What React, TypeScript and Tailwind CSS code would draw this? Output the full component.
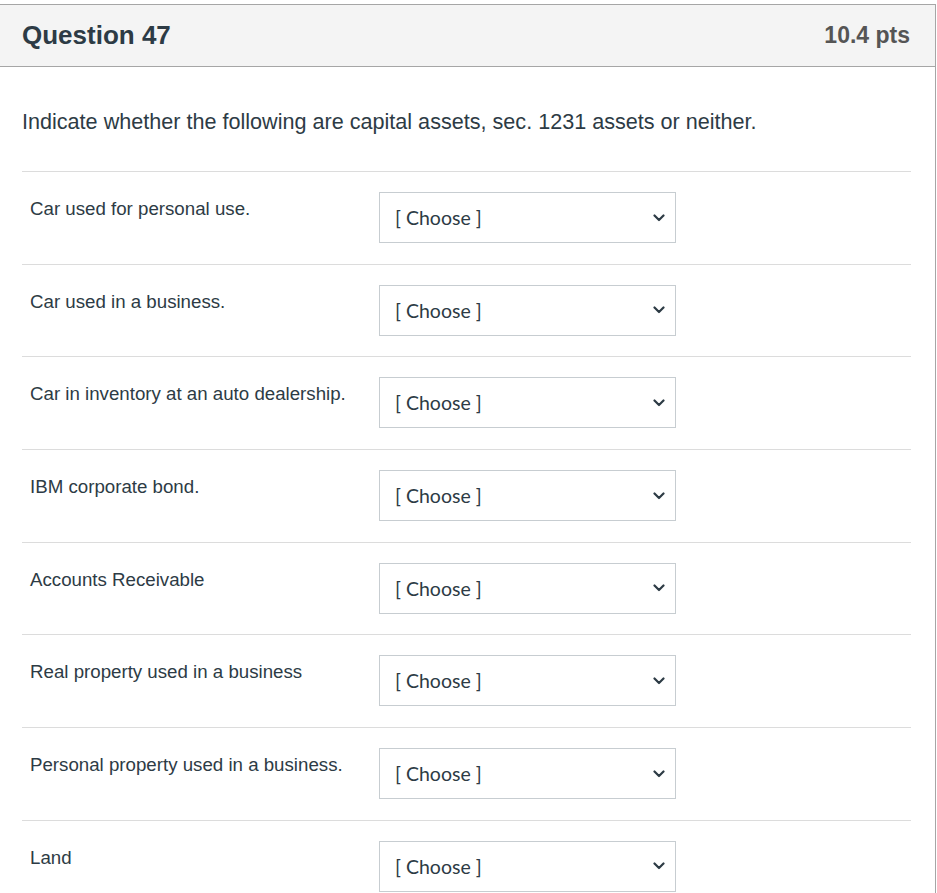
const items = [
  'Car used for personal use.',
  'Car used in a business.',
  'Car in inventory at an auto dealership.',
  'IBM corporate bond.',
  'Accounts Receivable',
  'Real property used in a business',
  'Personal property used in a business.',
  'Land',
];

function Chevron() {
  return (
    <svg width="12" height="8" viewBox="0 0 12 8" fill="none" className="text-[#2d3b45]">
      <path d="M1.5 1.5 L6 6 L10.5 1.5" stroke="currentColor" strokeWidth="2.2" strokeLinecap="round" strokeLinejoin="round" />
    </svg>
  );
}

function ChooseSelect() {
  return (
    <div className="mt-[20px] w-[297px] h-[51px] shrink-0 border border-[#c7cdd1] bg-white flex items-center justify-between pl-[15px] pr-[10px]">
      <span className="text-[19.5px] text-[#2d3b45] font-['Lato',sans-serif]">[ Choose ]</span>
      <Chevron />
    </div>
  );
}

export default function App() {
  return (
    <div className="w-[937px] h-[893px] overflow-hidden bg-white font-['Liberation_Sans',Arial,sans-serif] text-[#2d3b45]">
      <div className="mt-[4px] w-[936px] border-t border-r border-[#a6a6a6]">
        {/* Header */}
        <div className="h-[62px] bg-[#f4f4f4] border-b border-[#a6a6a6] flex items-center justify-between pl-[22px] pr-[25px]">
          <h2 className="text-[26px] font-bold">Question 47</h2>
          <span className="text-[23px] font-bold text-[#555]">10.4 pts</span>
        </div>

        {/* Body */}
        <div className="pl-[22px] pr-[24px]">
          <p className="pt-[41px] pb-[35px] text-[21.6px] leading-[28px]">
            Indicate whether the following are capital assets, sec. 1231 assets or neither.
          </p>

          {items.map((label) => (
            <div key={label} className="flex items-start h-[92.7px] border-t border-[#dcdcdc]">
              <div className="w-[357px] shrink-0 pl-[8px] pt-[27px] text-[18.7px] leading-[20px]">
                {label}
              </div>
              <ChooseSelect />
            </div>
          ))}
        </div>
      </div>
    </div>
  );
}
